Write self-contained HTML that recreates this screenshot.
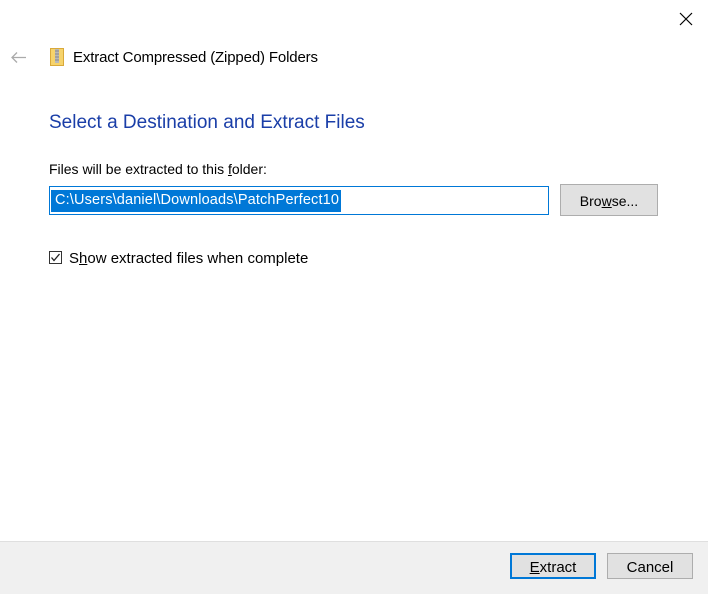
<!DOCTYPE html>
<html><head><style>
body{margin:0;width:708px;height:593px;background:#fff;position:relative;overflow:hidden;font-family:"Liberation Sans",sans-serif;font-size:14px;color:#000}
.a{position:absolute}
.btn{position:absolute;background:#e1e1e1;border:1px solid #adadad;box-sizing:border-box;text-align:center;font-size:14px}
</style></head><body>
<svg class="a" style="left:679px;top:12px" width="14" height="14"><path d="M1 1L13 13M13 1L1 13" stroke="#000" stroke-width="1.2"/></svg>
<svg class="a" style="left:10px;top:51px" width="17" height="13"><path d="M16 6.5H2M7 1.5L2 6.5L7 11.5" stroke="#aaa" stroke-width="1.3" fill="none"/></svg>
<svg class="a" style="left:50px;top:48px" width="14" height="18"><rect x="0.5" y="0.5" width="13" height="17" fill="#f6d36b" stroke="#d9a93a"/><rect x="5" y="1" width="4" height="14" fill="#b9b9b9"/><path d="M5 3h4M5 6h4M5 9h4M5 12h4" stroke="#777" stroke-width="0.8"/></svg>
<div class="a" style="left:73px;top:49px;font-size:15px;letter-spacing:-0.15px">Extract Compressed (Zipped) Folders</div>
<div class="a" style="left:49px;top:112px;font-size:19px;letter-spacing:0;color:#1a3ea8">Select a Destination and Extract Files</div>
<div class="a" style="left:49px;top:161px">Files will be extracted to this <u>f</u>older:</div>
<div class="a" style="left:49px;top:186px;width:500px;height:29px;border:1px solid #0078d7;box-sizing:border-box"></div>
<div class="a" style="left:51px;top:190px;width:290px;height:22px;background:#0078d7;color:#fff;font-size:14.5px;letter-spacing:0.15px;line-height:21px;padding-left:4px;box-sizing:border-box;white-space:nowrap;overflow:hidden">C:\Users\daniel\Downloads\PatchPerfect10</div>
<div class="btn" style="left:560px;top:184px;width:98px;height:32px;line-height:32px">Bro<u>w</u>se...</div>
<div class="a" style="left:49px;top:251px;width:13px;height:13px;border:1px solid #333;box-sizing:border-box"></div>
<svg class="a" style="left:49px;top:251px" width="13" height="13"><path d="M2.5 6.5L5 9.5L10.5 3" stroke="#222" stroke-width="1.3" fill="none"/></svg>
<div class="a" style="left:69px;top:250px;font-size:15px">S<u>h</u>ow extracted files when complete</div>
<div class="a" style="left:0;top:541px;width:708px;height:52px;background:#f0f0f0;border-top:1px solid #dfdfdf"></div>
<div class="btn" style="left:510px;top:553px;width:86px;height:26px;line-height:25px;border:2px solid #0078d7;font-size:15px"><u>E</u>xtract</div>
<div class="btn" style="left:607px;top:553px;width:86px;height:26px;line-height:27px;font-size:15px">Cancel</div>
</body></html>
